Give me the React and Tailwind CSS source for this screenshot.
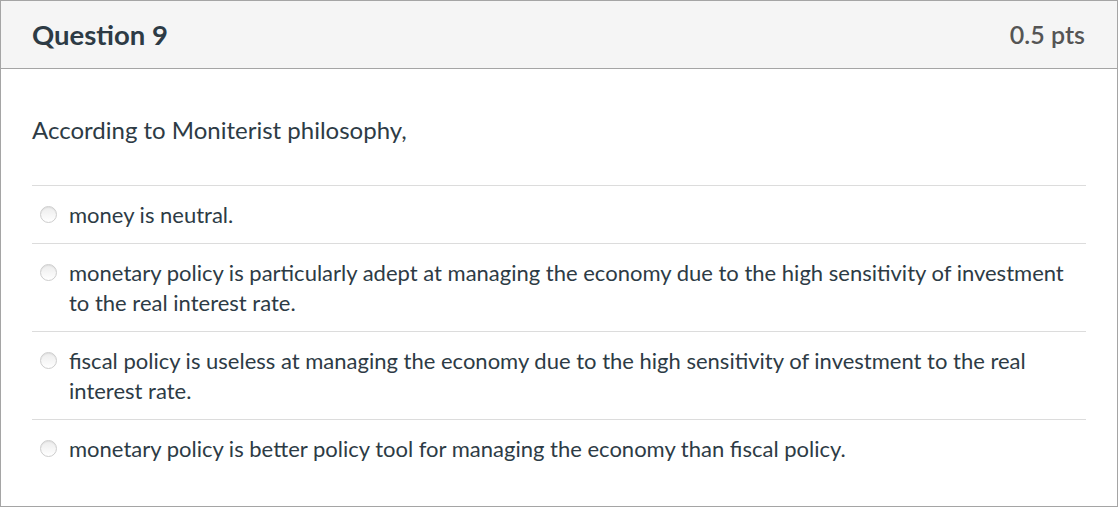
import React from 'react';

const ANSWERS = [
  'money is neutral.',
  'monetary policy is particularly adept at managing the economy due to the high sensitivity of investment to the real interest rate.',
  'fiscal policy is useless at managing the economy due to the high sensitivity of investment to the real interest rate.',
  'monetary policy is better policy tool for managing the economy than fiscal policy.',
];

export default function App() {
  return (
    <div className="w-[1118px] h-[508px] bg-white" style={{ fontFamily: 'Lato, "Noto Sans", sans-serif' }}>
      <div className="h-[507px] border border-[#a5a5a5] flex flex-col">
        <div className="h-[68px] flex items-center justify-between pl-[31px] pr-[32px] bg-[#f5f5f5] border-b border-[#a5a5a5]">
          <h2 className="text-[27.5px] font-bold text-[#2d3b45]">Question 9</h2>
          <span className="text-[25px] font-semibold text-[#555]">0.5 pts</span>
        </div>
        <div className="px-[31px] pt-[46px]">
          <p className="text-[24px] leading-[30px] text-[#2d3b45]">According to Moniterist philosophy,</p>
          <div className="mt-[40px]">
            {ANSWERS.map((a, i) => (
              <div key={i} className="flex items-start gap-[12px] border-t border-[#dcdcdc] pt-[14px] pb-[13px] pl-[8px]">
                <span className="mt-[6px] w-[17px] h-[17px] rounded-full border border-[#cdcdcd] bg-gradient-to-b from-[#ececec] to-white shadow-[inset_0_1px_1px_rgba(0,0,0,0.06)] flex-shrink-0" />
                <span className="text-[22px] leading-[30px] text-[#2d3b45]">{a}</span>
              </div>
            ))}
          </div>
        </div>
      </div>
    </div>
  );
}
